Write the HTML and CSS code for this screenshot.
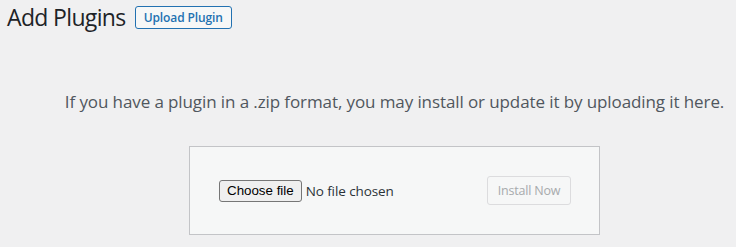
FILE: index.html
```html
<!DOCTYPE html>
<html lang="en">
<head>
<meta charset="utf-8">
<title>Add Plugins</title>
<link rel="stylesheet" href="styles.css">
</head>
<body>
<div class="wrap">
  <div class="header">
    <h1 class="page-title">Add Plugins</h1>
    <a class="page-action" href="#">Upload Plugin</a>
  </div>
  <div class="upload">
    <p class="help">If you have a plugin in a .zip format, you may install or update it by uploading it here.</p>
    <form class="upload-form">
      <div class="file-field">
        <span class="file-btn">Choose file</span>
        <span class="file-label">No file chosen</span>
      </div>
      <button class="install-btn" type="button" disabled>Install Now</button>
    </form>
  </div>
</div>
</body>
</html>
```

FILE: styles.css
```css
html, body {
  margin: 0;
  padding: 0;
  background: #f0f0f1;
  overflow: hidden;
}

body {
  font-family: "Open Sans", "DejaVu Sans", sans-serif;
  color: #3c434a;
}

.wrap {
  padding: 5px 0 0 7px;
}

.header {
  display: flex;
  align-items: center;
}

.page-title {
  margin: 0;
  font-size: 23px;
  font-weight: 400;
  line-height: 24px;
  color: #1d2327;
  letter-spacing: -0.65px;
}

.page-action {
  margin-left: 9px;
  display: inline-block;
  box-sizing: border-box;
  height: 23px;
  padding: 0 8px;
  line-height: 21px;
  font-size: 12px;
  font-weight: 600;
  color: #2271b1;
  text-decoration: none;
  border: 1px solid #2271b1;
  border-radius: 3px;
  background: #f6f7f7;
  letter-spacing: -0.1px;
}

.upload {
  display: flex;
  flex-direction: column;
  align-items: center;
  padding-left: 46px;
}

.help {
  margin: 61px 0 0;
  font-size: 17px;
  line-height: 24px;
  color: #50575e;
  white-space: nowrap;
  letter-spacing: -0.1px;
}

.upload-form {
  box-sizing: border-box;
  width: 411px;
  height: 89px;
  margin: 32px 0 0;
  padding: 0 28px 0 29px;
  display: flex;
  align-items: center;
  justify-content: space-between;
  background: #f6f7f7;
  border: 1px solid #c3c4c7;
}

.file-field {
  display: flex;
  align-items: center;
}

.file-btn {
  box-sizing: border-box;
  height: 22px;
  padding: 0 7px;
  line-height: 20px;
  font-family: "Liberation Sans", Arial, sans-serif;
  font-size: 13.33px;
  color: #000;
  background: #efefef;
  border: 1px solid #767676;
  border-radius: 3px;
  margin-top: 1px;
}

.file-label {
  margin-left: 4px;
  font-size: 13.5px;
  color: #2c3338;
  letter-spacing: -0.1px;
}

.install-btn {
  box-sizing: border-box;
  width: 84px;
  height: 29px;
  padding: 0;
  font-family: "Open Sans", "DejaVu Sans", sans-serif;
  font-size: 12.5px;
  color: #a7aaad;
  background: #f6f7f7;
  border: 1px solid #dcdcde;
  border-radius: 3px;
  letter-spacing: -0.2px;
}
```
